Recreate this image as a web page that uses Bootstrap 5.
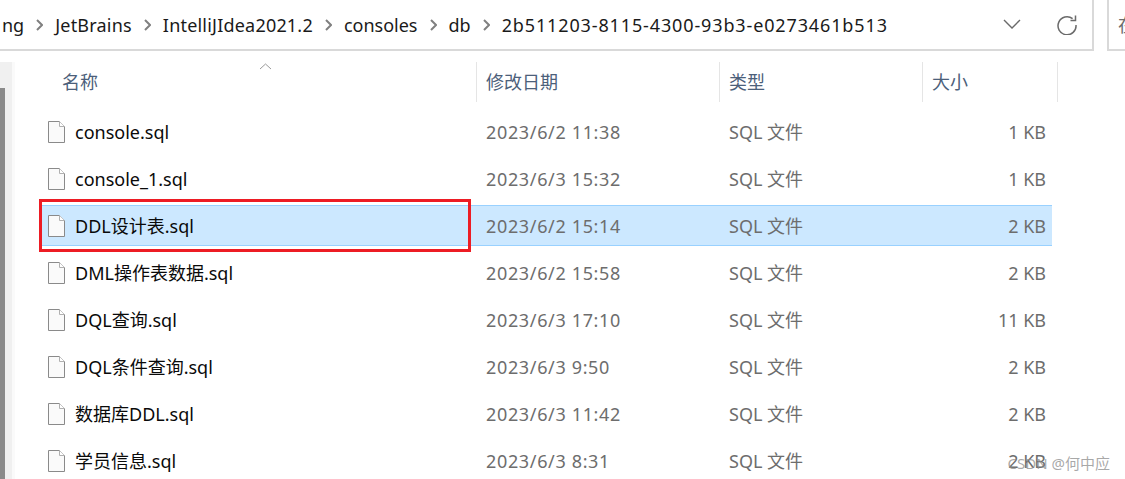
<!DOCTYPE html>
<html lang="zh">
<head>
<meta charset="utf-8">
<title>db</title>
<link href="https://cdn.jsdelivr.net/npm/bootstrap@5.3.0/dist/css/bootstrap.min.css" rel="stylesheet">
<style>
html,body{height:479px;overflow:hidden;background:#fff}
body{position:relative;font-family:"Noto Sans","Noto Sans CJK SC",sans-serif;font-size:18px;line-height:24px;color:#1a1a1a}
.topbar{height:51px}
.addr{width:1094px;border-bottom:2px solid #d9d9d9;border-right:2px solid #d9d9d9;overflow:hidden}
.crumb-gap{gap:12px;margin-left:2px;height:49px;white-space:nowrap}
.sep{width:7px;flex:none}
.wide-a{letter-spacing:.2px}
.wide-b{letter-spacing:.87px}
.ctl{margin-left:auto;padding-right:15px;gap:36px}
.searchbox{width:18px;margin-left:13px;flex:1;border-left:2px solid #d9d9d9;border-bottom:2px solid #d9d9d9;padding:0 0 0 9px;color:#6d6d6d;overflow:hidden}
.rail{width:12px;height:428px;background:#f0f0f0;margin-top:11px;padding-top:26px;flex:none}
.rail-thumb{width:5px;height:391px;background:#8a8a8a}
.rail-edge{width:3px;background:#fafafa;margin-top:11px;flex:none}
.listpane{padding-top:11px;flex:1;min-width:0}
.head-row,.file-row{display:grid;grid-template-columns:435px 243px 203px 129px}
.head-row{height:40px;margin-left:27px;grid-template-columns:435px 243px 203px 135px;color:#4c607a;width:max-content}
.hcell{border-right:1px solid #e5e5e5;display:flex;align-items:center;position:relative;padding-left:9px}
.hcell:first-child{padding-left:20px}
.sort{position:absolute;left:217px;top:1px}
.file-list{margin:9px 0 0 27px;width:1010px}
.file-row{height:41px;margin-bottom:6px;align-items:center;border-top:1px solid transparent;border-bottom:1px solid transparent}
.file-row.is-sel{background:#cce8ff;border-color:#99d1ff}
.fname{display:flex;align-items:center;gap:10px;padding-left:6px;color:#0a0a0a}
.fdate,.ftype{color:#6d6d6d;padding-left:9px}
.fdate{letter-spacing:.65px}
.fsize{color:#6d6d6d;text-align:right;padding-right:6px}
.redbox{position:absolute;left:39px;top:199px;width:432px;height:53px;border:3px solid #ed1c24;pointer-events:none}
.wm{position:absolute;right:15px;top:453px;font-size:15px;line-height:20px;color:rgba(140,140,140,.75);white-space:nowrap}
</style>
</head>
<body>
<div class="d-flex topbar">
  <div class="addr">
    <div class="d-flex align-items-center crumb-gap">
      <span>ng</span>
      <svg class="sep" viewBox="0 0 7 12" height="12"><path d="M1 1l5 5-5 5" fill="none" stroke="#808080" stroke-width="2"/></svg>
      <span class="wide-a">JetBrains</span>
      <svg class="sep" viewBox="0 0 7 12" height="12"><path d="M1 1l5 5-5 5" fill="none" stroke="#808080" stroke-width="2"/></svg>
      <span class="wide-a">IntelliJIdea2021.2</span>
      <svg class="sep" viewBox="0 0 7 12" height="12"><path d="M1 1l5 5-5 5" fill="none" stroke="#808080" stroke-width="2"/></svg>
      <span>consoles</span>
      <svg class="sep" viewBox="0 0 7 12" height="12"><path d="M1 1l5 5-5 5" fill="none" stroke="#808080" stroke-width="2"/></svg>
      <span>db</span>
      <svg class="sep" viewBox="0 0 7 12" height="12"><path d="M1 1l5 5-5 5" fill="none" stroke="#808080" stroke-width="2"/></svg>
      <span class="wide-b">2b511203-8115-4300-93b3-e0273461b513</span>
      <div class="d-flex align-items-center ctl">
        <svg width="18" height="11" viewBox="0 0 18 11"><path d="M1 1l8 8 8-8" fill="none" stroke="#6a6a6a" stroke-width="1.4"/></svg>
        <svg width="20" height="20" viewBox="0 0 20 20"><path d="M15.6 3.7A9 9 0 1 0 19 10" fill="none" stroke="#6a6a6a" stroke-width="1.5"/><path d="M18.5 0.5v5h-5" fill="none" stroke="#6a6a6a" stroke-width="1.5"/></svg>
      </div>
    </div>
  </div>
  <div class="searchbox d-flex align-items-center"><span>在</span></div>
</div>
<div class="d-flex">
  <div class="rail"><div class="rail-thumb"></div></div>
  <div class="rail-edge"></div>
  <div class="listpane">
    <div class="head-row">
      <div class="hcell"><span>名称</span><svg class="sort" width="13" height="7" viewBox="0 0 13 7"><path d="M1 6l5.500-5 5.500 5" fill="none" stroke="#9a9a9a"/></svg></div>
      <div class="hcell">修改日期</div>
      <div class="hcell">类型</div>
      <div class="hcell">大小</div>
    </div>
    <div class="file-list">
      <div class="file-row"><div class="fname"><svg width="17" height="22" viewBox="0 0 17 22"><path d="M.5.500h11l5 5v16H.5z" fill="#fafafa" stroke="#8a8a8a"/><path d="M11.500.500v5h5" fill="#fff" stroke="#b0b0b0"/></svg><span>console.sql</span></div><div class="fdate">2023/6/2 11:38</div><div class="ftype">SQL 文件</div><div class="fsize">1 KB</div></div>
      <div class="file-row"><div class="fname"><svg width="17" height="22" viewBox="0 0 17 22"><path d="M.5.500h11l5 5v16H.5z" fill="#fafafa" stroke="#8a8a8a"/><path d="M11.500.500v5h5" fill="#fff" stroke="#b0b0b0"/></svg><span>console_1.sql</span></div><div class="fdate">2023/6/3 15:32</div><div class="ftype">SQL 文件</div><div class="fsize">1 KB</div></div>
      <div class="file-row is-sel"><div class="fname"><svg width="17" height="22" viewBox="0 0 17 22"><path d="M.5.500h11l5 5v16H.5z" fill="#fafafa" stroke="#8a8a8a"/><path d="M11.500.500v5h5" fill="#fff" stroke="#b0b0b0"/></svg><span>DDL设计表.sql</span></div><div class="fdate">2023/6/2 15:14</div><div class="ftype">SQL 文件</div><div class="fsize">2 KB</div></div>
      <div class="file-row"><div class="fname"><svg width="17" height="22" viewBox="0 0 17 22"><path d="M.5.500h11l5 5v16H.5z" fill="#fafafa" stroke="#8a8a8a"/><path d="M11.500.500v5h5" fill="#fff" stroke="#b0b0b0"/></svg><span>DML操作表数据.sql</span></div><div class="fdate">2023/6/2 15:58</div><div class="ftype">SQL 文件</div><div class="fsize">2 KB</div></div>
      <div class="file-row"><div class="fname"><svg width="17" height="22" viewBox="0 0 17 22"><path d="M.5.500h11l5 5v16H.5z" fill="#fafafa" stroke="#8a8a8a"/><path d="M11.500.500v5h5" fill="#fff" stroke="#b0b0b0"/></svg><span>DQL查询.sql</span></div><div class="fdate">2023/6/3 17:10</div><div class="ftype">SQL 文件</div><div class="fsize">11 KB</div></div>
      <div class="file-row"><div class="fname"><svg width="17" height="22" viewBox="0 0 17 22"><path d="M.5.500h11l5 5v16H.5z" fill="#fafafa" stroke="#8a8a8a"/><path d="M11.500.500v5h5" fill="#fff" stroke="#b0b0b0"/></svg><span>DQL条件查询.sql</span></div><div class="fdate">2023/6/3 9:50</div><div class="ftype">SQL 文件</div><div class="fsize">2 KB</div></div>
      <div class="file-row"><div class="fname"><svg width="17" height="22" viewBox="0 0 17 22"><path d="M.5.500h11l5 5v16H.5z" fill="#fafafa" stroke="#8a8a8a"/><path d="M11.500.500v5h5" fill="#fff" stroke="#b0b0b0"/></svg><span>数据库DDL.sql</span></div><div class="fdate">2023/6/3 11:42</div><div class="ftype">SQL 文件</div><div class="fsize">2 KB</div></div>
      <div class="file-row"><div class="fname"><svg width="17" height="22" viewBox="0 0 17 22"><path d="M.5.500h11l5 5v16H.5z" fill="#fafafa" stroke="#8a8a8a"/><path d="M11.500.500v5h5" fill="#fff" stroke="#b0b0b0"/></svg><span>学员信息.sql</span></div><div class="fdate">2023/6/3 8:31</div><div class="ftype">SQL 文件</div><div class="fsize">2 KB</div></div>
    </div>
  </div>
</div>
<div class="redbox"></div>
<div class="wm">CSDN @何中应</div>
<script src="https://cdn.jsdelivr.net/npm/bootstrap@5.3.0/dist/js/bootstrap.bundle.min.js"></script>
</body>
</html>
